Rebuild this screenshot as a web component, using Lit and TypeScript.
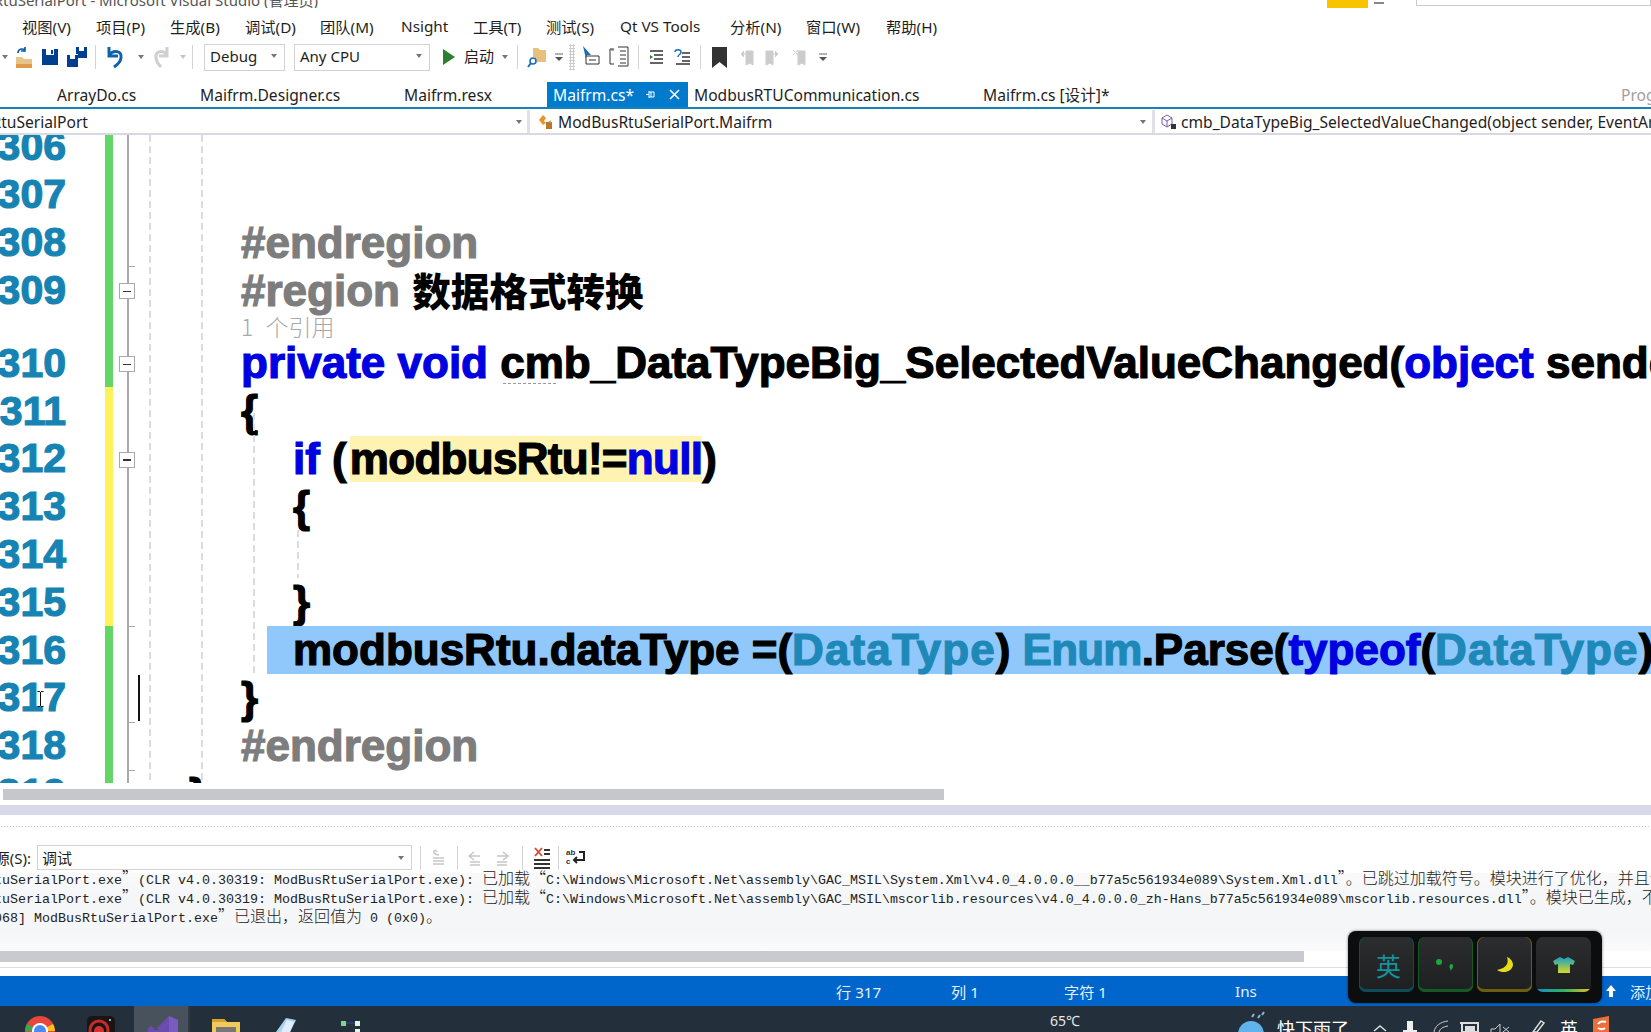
import { LitElement, html, css, svg } from "lit";
import { customElement } from "lit/decorators.js";

const drop = html`<i class="drop"></i>`;
const overflow = html`<svg class="ic" width="10" height="12" viewBox="0 0 10 12"><path d="M1 3h8" stroke="#666" stroke-width="1"/><path d="M1 6h8L5 10z" fill="#555"/></svg>`;

const ic = (w: number, h: number, body: unknown) =>
  html`<svg class="ic" width=${w} height=${h} viewBox="0 0 ${w} ${h}">${body}</svg>`;

const OUT1 = "tuSerialPort.exe”(CLR v4.0.30319: ModBusRtuSerialPort.exe): 已加载“C:\\Windows\\Microsoft.Net\\assembly\\GAC_MSIL\\System.Xml\\v4.0_4.0.0.0__b77a5c561934e089\\System.Xml.dll”。已跳过加载符号。模块进行了优化，并且调试器选项“仅我的代码”已启用。";
const OUT2 = "tuSerialPort.exe”(CLR v4.0.30319: ModBusRtuSerialPort.exe): 已加载“C:\\Windows\\Microsoft.Net\\assembly\\GAC_MSIL\\mscorlib.resources\\v4.0_4.0.0.0_zh-Hans_b77a5c561934e089\\mscorlib.resources.dll”。模块已生成，不包含符号。";
const OUT3 = "068] ModBusRtuSerialPort.exe”已退出，返回值为 0 (0x0)。";

const mono = (t: string) =>
  t.split(/([\u3000-\u9fff\uff00-\uffef“”]+)/).map((p, i) => (i % 2 ? html`<span class="c">${p}</span>` : p));

const k = (t: string) => html`<span class="kw">${t}</span>`;
const ty = (t: string) => html`<span class="ty">${t}</span>`;
const rg = (t: string) => html`<span class="rg">${t}</span>`;

interface Row { n?: string; bar: "g" | "y"; code?: unknown; fold?: boolean; tick?: boolean; cls?: string; }

const rows: Row[] = [
  { n: "306", bar: "g" },
  { n: "307", bar: "g" },
  { n: "308", bar: "g", code: rg("#endregion") },
  { n: "309", bar: "g", tick: true, fold: true, code: html`${rg("#region")} <span class="zh">数据格式转换</span>` },
  { n: "310", bar: "g", fold: true, code: html`${k("private")} ${k("void")} <span class="under">cmb</span>_DataTypeBig_SelectedValueChanged(${k("object")} sender, EventArgs e)` },
  { n: "311", bar: "y", code: "{" },
  { n: "312", bar: "y", fold: true, cls: "l1", code: html`${k("if")} (<span class="hl">modbusRtu!=${k("null")}</span>)` },
  { n: "313", bar: "y", cls: "l1", code: "{" },
  { n: "314", bar: "y", cls: "l1" },
  { n: "315", bar: "y", cls: "l1", code: "}" },
  { n: "316", bar: "g", tick: true, cls: "sel", code: html`modbusRtu.dataType =(${ty("DataType")}) <span class="ty en">Enum</span>.Parse(${k("typeof")}(${ty("DataType")})` },
  { n: "317", bar: "g", code: "}" },
  { n: "318", bar: "g", tick: true, code: rg("#endregion") },
  { n: "319", bar: "g", tick: true, cls: "l-1", code: "}" },
];

@customElement("app-root")
export class AppRoot extends LitElement {
  static styles = css`
    :host { display: block; width: 1651px; height: 1032px; overflow: hidden; background: #fff; position: relative;
      font-family: "Noto Sans", "Noto Sans CJK SC", sans-serif; color: #1e1e1e; }
    * { box-sizing: border-box; }
    .title { height: 8px; display: flex; overflow: hidden; position: relative; }
    .title .t { width: 318px; display: flex; justify-content: flex-end; white-space: nowrap; font-size: 15px; line-height: 16px; color: #555; margin-top: -8px; flex: none; }
    .title .fl { margin-left: 1009px; width: 41px; height: 8px; background: #f8c400; }
    .title .mn { margin-left: 6px; width: 10px; height: 2px; margin-top: 2px; background: #888; }
    .title .srch { margin-left: 32px; flex: 1; height: 6px; border: 1px solid #ccc; border-top: 0; }

    .menu { height: 33px; margin-top: 1px; padding-left: 22px; display: grid; align-items: center; font-size: 15.3px; white-space: nowrap;
      grid-template-columns: 74px 74px 75px 75px 81px 72px 73px 74px 110px 76px 80px auto; }
    .tools { height: 28px; margin-top: 1px; display: flex; align-items: center; font-size: 15px; white-space: nowrap; }
    .ic { display: block; flex: none; }
    .drop { flex: none; width: 0; height: 0; border: 3.5px solid transparent; border-top: 4px solid #777; border-bottom: 0; display: block; }
    .drop.off { border-top-color: #c4c4c4; }
    .sep { flex: none; display: block; width: 1px; height: 24px; background: #d4d4d8; }
    .combo { flex: none; height: 27px; border: 1px solid #d3d3d6; display: flex; align-items: center; justify-content: space-between; padding: 0 7px 2px 5px; }
    .debug { width: 81px; margin-left: 11px; }
    .cpu { width: 136px; margin-left: 9px; }
    .grip { flex: none; display: block; width: 6px; height: 26px; background-image: radial-gradient(#ccc 1px, transparent 1.2px); background-size: 3px 3px; }
    .lift { padding-bottom: 3px; }
    .m2 { margin-left: 2px; } .m4 { margin-left: 4px; } .m5 { margin-left: 5px; } .m6 { margin-left: 6px; } .m7 { margin-left: 7px; } .m8 { margin-left: 8px; }
    .m9 { margin-left: 9px; } .m10 { margin-left: 10px; } .m11 { margin-left: 11px; } .m12 { margin-left: 12px; } .m13 { margin-left: 13px; } .m14 { margin-left: 14px; } .m15 { margin-left: 15px; }

    .tabs { height: 27px; margin-top: 11px; padding-left: 57px; border-bottom: 2px solid #1383b9; display: grid; white-space: nowrap; font-size: 15.6px;
      grid-template-columns: 143px 204px 143px 141px 295px 638px auto; align-items: center; overflow: hidden; }
    .tab-on { background: #007acc; color: #fff; height: 100%; display: flex; align-items: center; padding: 0 8px 0 6px; justify-content: space-between; }
    .tab-on .acts { display: flex; align-items: center; gap: 12px; }
    .pad6 { padding-left: 6px; }
    .prog { color: #a0a0a0; }

    .nav { height: 26px; display: flex; border-bottom: 2px solid #d8d9e3; font-size: 15.6px; white-space: nowrap; overflow: hidden; padding-top: 1px; }
    .nav1 { width: 530px; flex: none; display: flex; align-items: center; border-right: 3px solid #dfe0e8; position: relative; }
    .nav1 .clip { width: 88px; display: flex; justify-content: flex-end; flex: none; }
    .nav1 .drop { margin-left: 428px; }
    .nav2 { width: 625px; flex: none; display: flex; align-items: center; border-right: 3px solid #dfe0e8; padding-left: 7px; gap: 3px; }
    .nav2 .drop { margin-left: auto; margin-right: 6px; }
    .nav3 { flex: 1; display: flex; align-items: center; padding-left: 5px; gap: 3px; }

    .editor { height: 648px; overflow: hidden; position: relative; }
    .lines { margin-top: -12px; display: flex; flex-direction: column; }
    .row { height: 47.8px; display: flex; flex: none; white-space: nowrap; }
    .row.lens { height: 25.2px; }
    .num { flex: none; width: 66px; display: flex; justify-content: flex-end; align-items: center; color: #1683b2; font: bold 41px/1 "Liberation Sans", sans-serif; -webkit-text-stroke: 1.2px #1683b2; }
    .bar { flex: none; width: 8px; margin-left: 39px; }
    .bar.g { background: #62d667; }
    .bar.y { background: #fdf25a; }
    .out { flex: none; width: 128px; position: relative; }
    .out::before { content: ""; position: absolute; left: 14px; top: 0; bottom: 0; width: 2px; background: #a9a9a9; }
    .out.tick::after { content: ""; position: absolute; left: 14px; top: 0; width: 8px; height: 1px; background: #a9a9a9; }
    .box { position: absolute; left: 6px; top: 17px; width: 16px; height: 16px; border: 1px solid #a9a9a9; background: #fff; display: flex; align-items: center; justify-content: center; z-index: 1; }
    .box::after { content: ""; width: 8px; height: 1.5px; background: #333; }
    .code { flex: 1; min-width: 0; display: block; font: bold 44px/47.8px "Liberation Sans", "Noto Sans CJK SC", sans-serif; color: #000; -webkit-text-stroke: 1.2px currentColor; white-space: pre; }
    .l1 .code { padding-left: 52px; }
    .l-1 .code { margin-left: -52px; }
    .sel .code { margin-left: 26px; padding-left: 26px; background: #90c8fb; }
    .kw { color: #0000e0; }
    .ty { color: #1e88b8; letter-spacing: 1.1px; }
    .ty.en { letter-spacing: -0.8px; }
    .rg { color: #7d7d7d; }
    .zh { font-size: 38.6px; font-family: "Noto Sans CJK SC", sans-serif; font-weight: 900; -webkit-text-stroke: 0; }
    .hl { background: #fff3b2; display: inline-block; height: 46px; line-height: 46px; margin-left: 3px; letter-spacing: -0.7px; }
    .under { position: relative; }
    .under::after { content: ""; position: absolute; left: 2px; bottom: 2px; width: 54px; height: 3px; background-image: radial-gradient(#999 1px, transparent 1.2px); background-size: 5px 3px; background-repeat: repeat-x; }
    .lens-t { font: 23px/25px "Noto Sans CJK SC", sans-serif; font-weight: 300; color: #a8a8a8; word-spacing: 7px; }
    .guide { position: absolute; width: 2px; background-image: repeating-linear-gradient(#dcdcdc 0 7px, transparent 7px 11px); }
    .g1 { left: 149px; top: 0; bottom: 0; }
    .g2 { left: 201px; top: 0; bottom: 0; }
    .g3 { left: 253px; top: 278px; height: 264px; }
    .g4 { left: 297px; top: 395px; height: 48px; }
    .caret { position: absolute; left: 138px; top: 540px; width: 2px; height: 46px; background: #111; }
    .ibeam { position: absolute; left: 37px; top: 556px; }

    .hs { height: 17px; padding: 6px 0 0 3px; }
    .hs i { display: block; height: 11px; width: 941px; background: #c6c7cc; }
    .band { height: 10px; margin-top: 5px; background: #d7d9eb; }
    .dots { height: 4px; margin-top: 10px; background-image: radial-gradient(#c8c8c8 0.8px, transparent 1px); background-size: 3px 3px; }
    .otools { height: 44px; display: flex; align-items: center; font-size: 15px; white-space: nowrap; padding-top: 13px; }
    .otools .lb { width: 31px; flex: none; display: flex; justify-content: flex-end; }
    .ocombo { flex: none; width: 375px; margin-left: 6px; height: 25px; border: 1px solid #d3d3d6; display: flex; align-items: center; justify-content: space-between; padding: 0 7px 0 4px; }
    .output { height: 78px; display: flow-root; background: linear-gradient(#fafafb, #f5f6f8 30%, #f5f6f8 75%, #fbfbfc); }
    .olines { margin-top: -5px; }
    .oline { font: 13.33px/19px "Liberation Mono", monospace; height: 19px; color: #222; white-space: pre; margin-left: -6px; }
    .oline .c { font: 16px/19px "Noto Sans CJK SC", sans-serif; font-weight: 300; }
    .hs2 { height: 16px; background: #fff; }
    .hs2 i { display: block; height: 11px; width: 1304px; background: #c9cacf; }
    .rule { height: 9px; border-top: 1px solid #dedede; }
    .status { height: 30px; background: #0066cc; color: #e6f0fb; font-size: 15.2px; display: grid; align-items: center; white-space: nowrap; padding-left: 836px;
      grid-template-columns: 115px 113px 171px 370px 25px auto; overflow: hidden; }
    .task { height: 26px; background: #232f3a; position: relative; display: flex; overflow: hidden; color: #fff; }
    .ti { flex: none; display: block; }
    .chrome { margin-left: 25px; }
    .rec { margin-left: 32px; }
    .active { flex: none; width: 56px; margin-left: 19px; background: #48525d; border-right: 2px solid #2f3942; padding-left: 14px; }
    .folder { margin-left: 22px; }
    .doc { margin-left: 32px; }
    .dotsapp { margin-left: 41px; }
    .temp { position: absolute; left: 1050px; top: 5px; font-size: 14px; line-height: 20px; color: #e8e8e8; }
    .tray { position: absolute; right: 0; top: 0; height: 26px; width: 421px; display: flex; align-items: flex-start; white-space: nowrap; font-size: 18px; }
    .tray span { line-height: 26px; margin-top: 10px; }
    .tm7 { margin-left: 7px; } .tm8 { margin-left: 8px; } .tm10 { margin-left: 10px; } .tm11 { margin-left: 11px; } .tm14 { margin-left: 14px; } .tm16 { margin-left: 16px; } .tm20 { margin-left: 20px; } .tm24 { margin-left: 24px; }

    .ime { position: absolute; left: 1348px; top: 931px; width: 254px; height: 72px; background: #0c0d0e; border-radius: 8px; padding: 6px 11px; display: grid; grid-template-columns: repeat(4, 55px); gap: 4px; box-shadow: 0 0 3px #0008; }
    .key { height: 55px; border-radius: 7px; background: linear-gradient(#2c2d2f, #1e1f21); display: flex; align-items: center; justify-content: center; font: 25px "Noto Sans CJK SC", sans-serif; color: #14939c; }
    .key.a { box-shadow: inset 0 -3px 0 #0f4c58, inset 1px 0 0 #0f4c58, inset -1px 0 0 #0f4c58; padding-left: 4px; }
    .key.b { box-shadow: inset 0 -3px 0 #145a25, inset 1px 0 0 #145a25, inset -1px 0 0 #145a25; }
    .key.c { box-shadow: inset 0 -3px 0 #6b5e10, inset 1px 0 0 #6b5e10, inset -1px 0 0 #6b5e10; }
    .key.d { position: relative; overflow: hidden; }
    .key.d::after { content: ""; position: absolute; left: 0; right: 0; bottom: 0; height: 3px; background: linear-gradient(90deg, #1590c8, #2fb060, #e5c020); }
  `;

  render() {
    return html`
      <div class="title">
        <div class="t">ModBusRtuSerialPort - Microsoft Visual Studio (管理员)</div>
        <div class="fl"></div><div class="mn"></div><div class="srch"></div>
      </div>
      <div class="menu">
        <span>视图(V)</span><span>项目(P)</span><span>生成(B)</span><span>调试(D)</span><span>团队(M)</span><span>Nsight</span>
        <span>工具(T)</span><span>测试(S)</span><span>Qt VS Tools</span><span>分析(N)</span><span>窗口(W)</span><span>帮助(H)</span>
      </div>
      ${this.toolbar()}
      <div class="tabs">
        <span>ArrayDo.cs</span><span>Maifrm.Designer.cs</span><span>Maifrm.resx</span>
        <div class="tab-on"><span>Maifrm.cs*</span><span class="acts">
          ${ic(11, 11, svg`<path d="M0 5.500h3M3 2v7M3 3h5v5H3M5 3v5" stroke="#fff" fill="none"/>`)}
          ${ic(11, 11, svg`<path d="M1 1l9 9M10 1l-9 9" stroke="#fff" stroke-width="1.600"/>`)}
        </span></div>
        <span class="pad6">ModbusRTUCommunication.cs</span><span>Maifrm.cs [设计]*</span><span class="prog">Prog</span>
      </div>
      <div class="nav">
        <div class="nav1"><div class="clip">ModBusRtuSerialPort</div>${drop}</div>
        <div class="nav2">
          ${ic(18, 18, svg`<path d="M2 7l4-5 3 3-2 3 2 2-3 2z" fill="#e8942a"/><path d="M9 9h6v7H9z" fill="#b9772a"/><path d="M11 9l3-2v3z" fill="#c9a36a"/>`)}
          <span>ModBusRtuSerialPort.Maifrm</span>${drop}
        </div>
        <div class="nav3">
          ${ic(18, 18, svg`<path d="M7 2l5 3v6l-5 3-5-3V5z M2 5l5 3 5-3 M7 8v6" fill="none" stroke="#7a5ea8"/><rect x="11" y="11" width="5" height="5" fill="#333"/>`)}
          <span>cmb_DataTypeBig_SelectedValueChanged(object sender, EventArgs e)</span>
        </div>
      </div>
      <div class="editor">
        <div class="lines">
          ${rows.map((r, i) => html`
            ${i === 4 ? html`<div class="row lens"><div class="num"></div><div class="bar g"></div><div class="out"></div><div class="lens-t">1 个引用</div></div>` : ""}
            <div class="row ${r.cls ?? ""}">
              <div class="num">${r.n}</div>
              <div class="bar ${r.bar}"></div>
              <div class="out ${r.tick ? "tick" : ""}">${r.fold ? html`<div class="box"></div>` : ""}</div>
              <div class="code">${r.code ?? ""}</div>
            </div>`)}
        </div>
        <i class="guide g1"></i><i class="guide g2"></i><i class="guide g3"></i><i class="guide g4"></i>
        <i class="caret"></i>
        <svg class="ibeam" width="7" height="16" viewBox="0 0 7 16"><path d="M0.500 0.500h2.500M4 0.500h2.500M3.500 1v14M0.500 15.500h2.500M4 15.500h2.500" stroke="#111" fill="none"/></svg>
      </div>
      <div class="hs"><i></i></div>
      <div class="band"></div>
      <div class="dots"></div>
      <div class="otools">
        <div class="lb">源(S):</div>
        <div class="ocombo"><span>调试</span>${drop}</div>
        <i class="sep m8"></i>
        <span class="m9">${ic(18, 20, svg`<path d="M5 2c-3 2 0 5 4 5M5 2l2 2M3 10h11M3 13h11M3 16h11" stroke="#c6c6c6" stroke-width="1.500" fill="none"/>`)}</span>
        <i class="sep m9"></i>
        <span class="m9">${ic(15, 16, svg`<path d="M7 2L2 6l5 4M2 6h11M3 12h10M3 15h10" stroke="#c6c6c6" stroke-width="1.400" fill="none"/>`)}</span>
        <span class="m13">${ic(15, 16, svg`<path d="M8 2l5 4-5 4M13 6H2M2 12h10M2 15h10" stroke="#c6c6c6" stroke-width="1.400" fill="none"/>`)}</span>
        <i class="sep m12"></i>
        <span class="m10">${ic(18, 22, svg`<path d="M2 1l7 8M9 1L2 9" stroke="#d8452e" stroke-width="1.800"/><path d="M11 3h6M11 7h6M1 13h16M1 17h16M1 21h16" stroke="#333" stroke-width="2"/>`)}</span>
        <i class="sep m7"></i>
        <span class="m7">${ic(20, 20, svg`<text x="0" y="7" font-size="8" font-family="Liberation Sans" font-weight="bold" fill="#333">ab</text><text x="0" y="16" font-size="8" font-family="Liberation Sans" font-weight="bold" fill="#333">c</text><path d="M13 4h5v8h-9M11 9l-3 3 3 3" stroke="#222" stroke-width="2" fill="none"/>`)}</span>
      </div>
      <div class="output">
        <div class="olines">
          <div class="oline">${mono(OUT1)}</div>
          <div class="oline">${mono(OUT2)}</div>
          <div class="oline">${mono(OUT3)}</div>
        </div>
      </div>
      <div class="hs2"><i></i></div>
      <div class="rule"></div>
      <div class="status">
        <span>行 317</span><span>列 1</span><span>字符 1</span><span>Ins</span>
        ${ic(12, 14, svg`<path d="M6 1L1 7h3v6h4V7h3z" fill="#fff"/>`)}
        <span>添加到源代码管理</span>
      </div>
      ${this.taskbar()}
      <div class="ime">
        <div class="key a">英</div>
        <div class="key b">${ic(24, 22, svg`<circle cx="5" cy="8" r="3" fill="#1fa83a"/><path d="M17 10c3 0 3 4-1 7 1-2 0-2.500-.5-3.500s.5-3.500 1.500-3.500z" fill="#1fa83a"/>`)}</div>
        <div class="key c">${ic(18, 18, svg`<path d="M11 1c2 6 0 11-10 13 6 4 15 2 16-5 0-4-3-7-6-8z" fill="#e6dc18"/>`)}</div>
        <div class="key d">${ic(22, 16, svg`<defs><linearGradient id="sh" x1="0" y1="0" x2="0" y2="1"><stop offset="0" stop-color="#14a0c8"/><stop offset="1" stop-color="#d8d820"/></linearGradient></defs><path d="M7 0l4 2 4-2 7 4-2 4-3-1v9H5V7L2 8 0 4z" fill="url(#sh)"/>`)}</div>
      </div>
    `;
  }

  toolbar() {
    return html`<div class="tools">
      <span class="m2">${drop}</span>
      <span class="m6">${ic(19, 24, svg`<path d="M2 12h6l2 2h8v9H2z" fill="#e8c48a"/><path d="M2 19h16v4H2z" fill="#e09a4a"/><path d="M4 8c0-4 4-5 7-3M11 2v4H7" stroke="#0a5aa8" stroke-width="1.600" fill="none"/>`)}</span>
      <span class="m8">${ic(18, 18, svg`<path d="M1 1h16v16H1z" fill="#003f8f"/><path d="M5 1h8v6H5z" fill="#fff"/><path d="M10 2h2v4h-2z" fill="#003f8f"/>`)}</span>
      <span class="m8">${ic(20, 20, svg`<path d="M0 8h11v12H0z" fill="#003f8f"/><path d="M3 8h5v4H3z" fill="#fff"/><path d="M9 0h11v11H11V7H9z" fill="#003f8f"/><path d="M12 0h5v4h-5z" fill="#fff"/>`)}</span>
      <i class="sep m8"></i>
      <span class="m10">${ic(18, 24, svg`<path d="M3 2v9h9M3 10c5-6 13-4 12 3-.5 4-4 7-7 9" stroke="#1162ad" stroke-width="3" fill="none"/>`)}</span>
      <span class="m14"><i class="drop"></i></span>
      <span class="m10">${ic(16, 24, svg`<path d="M13 2v9H5M13 10C9 4 1 6 2 13c.5 4 3 7 5 9" stroke="#cfcfcf" stroke-width="3" fill="none"/>`)}</span>
      <span class="m10"><i class="drop off"></i></span>
      <i class="sep m6"></i>
      <div class="combo debug"><span>Debug</span>${drop}</div>
      <div class="combo cpu"><span>Any CPU</span>${drop}</div>
      <span class="m12">${ic(14, 18, svg`<path d="M1 1l12 8-12 8z" fill="#2e7d32"/>`)}</span>
      <span class="m8 lift">启动</span>
      <span class="m8">${drop}</span>
      <i class="sep m9"></i>
      <span class="m9">${ic(20, 24, svg`<path d="M6 3h5l2 2h6v12H8V12H6z" fill="#e6c07c"/><circle cx="6" cy="16" r="3" fill="none" stroke="#1a6fb8" stroke-width="1.600"/><path d="M4 18l-3 4" stroke="#1a6fb8" stroke-width="2"/>`)}</span>
      <span class="m7">${overflow}</span>
      <span class="m5"><i class="grip"></i></span>
      <span class="m7">${ic(18, 24, svg`<path d="M1 1l8 9H5l-1 4z" fill="#1a6fb8"/><path d="M4 11h13v8H4zM7 15h7" stroke="#333" fill="#fff"/>`)}</span>
      <span class="m9">${ic(20, 22, svg`<path d="M5 3H1v15h4M9 1h10v19H9M11 5h6M11 9h6M11 13h6M11 17h6" stroke="#333" fill="none"/><path d="M2 4h3" stroke="#1a6fb8"/>`)}</span>
      <i class="sep m9"></i>
      <span class="m10">${ic(15, 16, svg`<path d="M1 2h13M5 6h9M5 10h9M1 14h13" stroke="#333" stroke-width="1.400"/><path d="M1 6l3 2-3 2z" fill="#2e7d32"/>`)}</span>
      <span class="m9">${ic(18, 18, svg`<path d="M2 4c0-3 6-3 6 0s-3 2-3 5" stroke="#1a6fb8" stroke-width="1.500" fill="none"/><path d="M9 5h8M9 9h8M9 13h8M3 16h14" stroke="#333" stroke-width="1.300"/>`)}</span>
      <i class="sep m9"></i>
      <span class="m11">${ic(15, 21, svg`<path d="M0 0h15v21l-7.500-6L0 21z" fill="#333"/>`)}</span>
      <span class="m14">${ic(13, 18, svg`<path d="M5 3h7v14l-3-2-4 2zM5 6H0M3 3L0 6l3 3" fill="#ccc" stroke="#ccc"/>`)}</span>
      <span class="m11">${ic(13, 18, svg`<path d="M1 3h7v14l-3-2-4 2zM8 6h5M10 3l3 3-3 3" fill="#ccc" stroke="#ccc"/>`)}</span>
      <span class="m15">${ic(13, 18, svg`<path d="M5 3h7v14l-3-2-4 2zM0 2l5 5M5 2L0 7" fill="#ccc" stroke="#ccc"/>`)}</span>
      <span class="m12">${overflow}</span>
    </div>`;
  }

  taskbar() {
    return html`<div class="task">
      <svg class="ti chrome" width="30" height="26" viewBox="0 0 30 26">
        <circle cx="15" cy="25" r="15" fill="#e8453c"/>
        <path d="M15 25L28 18a15 15 0 0 1 2 7z" fill="#f8c41c"/>
        <path d="M0 25a15 15 0 0 1 2-7l13 7z" fill="#34a853"/>
        <circle cx="15" cy="25" r="8" fill="#fff"/><circle cx="15" cy="25" r="6" fill="#4a8af4"/>
      </svg>
      <svg class="ti rec" width="28" height="26" viewBox="0 0 28 26">
        <rect x="0" y="10" width="28" height="22" rx="5" fill="#1a1414"/>
        <circle cx="12" cy="24" r="9" fill="none" stroke="#c42a2a" stroke-width="3"/><circle cx="12" cy="25" r="5" fill="#d83030"/><circle cx="23" cy="14" r="1" fill="#ddd"/>
      </svg>
      <div class="active">
        <svg class="ti" width="30" height="26" viewBox="0 0 30 26"><path d="M21 10l9 4v12h-9z" fill="#7a5cc0"/><path d="M21 10L8 23l-5-3-3 2v4h21z" fill="#6a4cae"/><path d="M5 24h6l-3-2z" fill="#48525d"/></svg>
      </div>
      <svg class="ti folder" width="28" height="26" viewBox="0 0 28 26">
        <path d="M0 13h12l3 3h13v10H0z" fill="#f0cb5c"/><path d="M0 13h12l3 3H0z" fill="#d8a030"/><rect x="4" y="21" width="20" height="5" fill="#777"/>
      </svg>
      <svg class="ti doc" width="26" height="26" viewBox="0 0 26 26">
        <path d="M14 12l10 2-6 12H4z" fill="#a8d4ee"/><path d="M15 14l7 2-4 10H9z" fill="#dfeefa"/>
      </svg>
      <svg class="ti dotsapp" width="24" height="26" viewBox="0 0 24 26">
        <rect x="2" y="15" width="5" height="5" fill="#7fd88a"/><rect x="16" y="15" width="5" height="5" fill="#dff5e5"/><rect x="16" y="23" width="5" height="5" fill="#dff5e5"/><path d="M7 17h9" stroke="#2b4fa8"/>
      </svg>
      <div class="temp">65℃</div>
      <div class="tray">
        <svg class="tm7" width="32" height="26" viewBox="0 0 32 26"><circle cx="14" cy="28" r="13" fill="#5fb4ee"/><path d="M17 8l-2 3M23 9l-2 3M27 6l-2 3" stroke="#8ab8dc" stroke-width="2"/></svg>
        <span class="tm8">快下雨了</span>
        <svg class="tm24" width="14" height="26" viewBox="0 0 14 26"><path d="M1 25l6-5 6 5" stroke="#ddd" fill="none" stroke-width="1.500"/></svg>
        <svg class="tm16" width="14" height="26" viewBox="0 0 14 26"><path d="M4 15h6v9h4v2H0v-2h4z" fill="#eee"/></svg>
        <svg class="tm16" width="16" height="26" viewBox="0 0 16 26"><path d="M1 26c1-6 6-10 14-11M6 26c1-3 3-5 9-6" stroke="#ccc" fill="none"/></svg>
        <svg class="tm11" width="20" height="26" viewBox="0 0 20 26"><path d="M0 17h2M2 17h16v9H2z" stroke="#ddd" fill="none" stroke-width="2"/><rect x="5" y="20" width="10" height="6" fill="#ddd"/></svg>
        <svg class="tm10" width="20" height="26" viewBox="0 0 20 26"><path d="M1 26v-3h4l5-5v8M13 21l6 5M19 21l-6 5" stroke="#ccc" fill="none"/></svg>
        <svg class="tm20" width="16" height="26" viewBox="0 0 16 26"><path d="M11 15l3 2-7 9H3z" stroke="#ddd" fill="none" stroke-width="1.500"/></svg>
        <span class="tm14">英</span>
        <svg class="tm14" width="20" height="26" viewBox="0 0 20 26"><path d="M1 24l0-11 16-3v16H1z" fill="#e8703a"/><path d="M6 18c2-3 6-3 8-2M6 22c3 2 6 1 7 0" stroke="#fff" fill="none" stroke-width="2"/></svg>
      </div>
    </div>`;
  }
}
